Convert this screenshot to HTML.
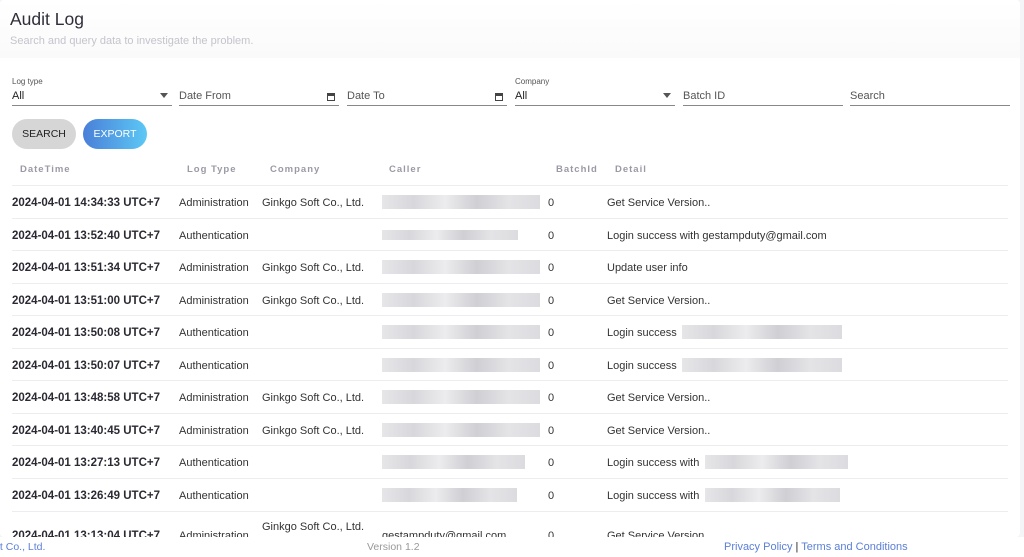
<!DOCTYPE html>
<html><head><meta charset="utf-8"><style>
*{margin:0;padding:0;box-sizing:border-box}
body{width:1024px;height:557px;overflow:hidden;background:#f4f5f7;font-family:"Liberation Sans",sans-serif;position:relative;color:#2b2b33}
.a{position:absolute;white-space:nowrap}
.card{position:absolute;left:0;top:0;width:1020px;height:537px;background:#fff;border-radius:4px;overflow:hidden}
.hdr{position:absolute;left:0;top:0;width:1020px;height:58px;background:linear-gradient(#fff,#fafafa)}
.fld{position:absolute;top:105px;height:1px;background:#888}
.ph{font-size:11px;color:#555;top:90px}
.th{font-size:9.5px;color:#9a9aa6;letter-spacing:1px;top:164px;font-weight:bold}
.line{position:absolute;left:12px;width:996px;height:1px;background:#ededf0}
.r{position:absolute;left:0;width:1020px;height:20px}
.c{font-size:11px;color:#333;margin-top:2px}
.b{font-weight:bold;font-size:11.5px;color:#2a2a33;margin-top:1px}
.blur{position:absolute;height:14px;background:linear-gradient(90deg,#e6e6e9,#d8d8dc 20%,#ececee 40%,#cfcfd4 60%,#e4e4e7 80%,#dcdce0)}
</style></head><body>
<div class="card">
<div class="hdr"></div>
<div class="a" style="left:10px;top:9px;font-size:17.5px;color:#2f2f3a">Audit Log</div>
<div class="a" style="left:10px;top:35px;font-size:11px;color:#c4c4cc">Search and query data to investigate the problem.</div>

<div class="a" style="left:12px;top:77px;font-size:8px;color:#555">Log type</div>
<div class="a" style="left:12px;top:90px;font-size:11px;color:#222">All</div>
<div class="a" style="left:160px;top:93px;border:4px solid transparent;border-top:5px solid #555"></div>
<div class="fld" style="left:12px;width:160px"></div>
<div class="a ph" style="left:179px">Date From</div>
<div class="a" style="left:327px;top:93px;width:8px;height:8px;border:1.5px solid #444;border-top-width:3px"></div>
<div class="fld" style="left:179px;width:160px"></div>
<div class="a ph" style="left:347px">Date To</div>
<div class="a" style="left:495px;top:93px;width:8px;height:8px;border:1.5px solid #444;border-top-width:3px"></div>
<div class="fld" style="left:347px;width:160px"></div>
<div class="a" style="left:515px;top:77px;font-size:8px;color:#555">Company</div>
<div class="a" style="left:515px;top:90px;font-size:11px;color:#222">All</div>
<div class="a" style="left:663px;top:93px;border:4px solid transparent;border-top:5px solid #555"></div>
<div class="fld" style="left:515px;width:160px"></div>
<div class="a ph" style="left:683px">Batch ID</div>
<div class="fld" style="left:683px;width:160px"></div>
<div class="a ph" style="left:850px">Search</div>
<div class="fld" style="left:850px;width:160px"></div>

<div class="a" style="left:12px;top:119px;width:64px;height:30px;border-radius:15px;background:#d6d6d6;font-size:10.5px;color:#222;text-align:center;line-height:30px">SEARCH</div>
<div class="a" style="left:83px;top:119px;width:64px;height:30px;border-radius:15px;background:linear-gradient(90deg,#4a7fd8,#5cc8f5);font-size:10.5px;color:#fff;text-align:center;line-height:30px">EXPORT</div>

<div class="a th" style="left:20px">DateTime</div>
<div class="a th" style="left:187px">Log Type</div>
<div class="a th" style="left:270px">Company</div>
<div class="a th" style="left:389px">Caller</div>
<div class="a th" style="left:556px">BatchId</div>
<div class="a th" style="left:615px">Detail</div>
<div class="line" style="top:185px"></div>
<div class="line" style="top:218px"></div>
<div class="line" style="top:250px"></div>
<div class="line" style="top:283px"></div>
<div class="line" style="top:315px"></div>
<div class="line" style="top:348px"></div>
<div class="line" style="top:380px"></div>
<div class="line" style="top:413px"></div>
<div class="line" style="top:445px"></div>
<div class="line" style="top:478px"></div>
<div class="line" style="top:511px"></div>

<div class="a b" style="left:12px;top:196px">2024-04-01 14:34:33 UTC+7</div><div class="a c" style="left:179px;top:195px">Administration</div><div class="a c" style="left:262px;top:195px">Ginkgo Soft Co., Ltd.</div><div class="blur" style="left:382px;top:195px;width:158px"></div><div class="a c" style="left:548px;top:195px">0</div><div class="a c" style="left:607px;top:195px">Get Service Version..</div>
<div class="a b" style="left:12px;top:229px">2024-04-01 13:52:40 UTC+7</div><div class="a c" style="left:179px;top:228px">Authentication</div><div class="blur" style="left:382px;top:230px;width:136px;height:10px"></div><div class="a c" style="left:548px;top:228px">0</div><div class="a c" style="left:607px;top:228px">Login success with gestampduty@gmail.com</div>
<div class="a b" style="left:12px;top:261px">2024-04-01 13:51:34 UTC+7</div><div class="a c" style="left:179px;top:260px">Administration</div><div class="a c" style="left:262px;top:260px">Ginkgo Soft Co., Ltd.</div><div class="blur" style="left:382px;top:260px;width:158px"></div><div class="a c" style="left:548px;top:260px">0</div><div class="a c" style="left:607px;top:260px">Update user info</div>
<div class="a b" style="left:12px;top:294px">2024-04-01 13:51:00 UTC+7</div><div class="a c" style="left:179px;top:293px">Administration</div><div class="a c" style="left:262px;top:293px">Ginkgo Soft Co., Ltd.</div><div class="blur" style="left:382px;top:293px;width:158px"></div><div class="a c" style="left:548px;top:293px">0</div><div class="a c" style="left:607px;top:293px">Get Service Version..</div>
<div class="a b" style="left:12px;top:326px">2024-04-01 13:50:08 UTC+7</div><div class="a c" style="left:179px;top:325px">Authentication</div><div class="blur" style="left:382px;top:325px;width:158px"></div><div class="a c" style="left:548px;top:325px">0</div><div class="a c" style="left:607px;top:325px">Login success</div><div class="blur" style="left:682px;top:325px;width:160px"></div>
<div class="a b" style="left:12px;top:359px">2024-04-01 13:50:07 UTC+7</div><div class="a c" style="left:179px;top:358px">Authentication</div><div class="blur" style="left:382px;top:358px;width:158px"></div><div class="a c" style="left:548px;top:358px">0</div><div class="a c" style="left:607px;top:358px">Login success</div><div class="blur" style="left:682px;top:358px;width:160px"></div>
<div class="a b" style="left:12px;top:391px">2024-04-01 13:48:58 UTC+7</div><div class="a c" style="left:179px;top:390px">Administration</div><div class="a c" style="left:262px;top:390px">Ginkgo Soft Co., Ltd.</div><div class="blur" style="left:382px;top:390px;width:158px"></div><div class="a c" style="left:548px;top:390px">0</div><div class="a c" style="left:607px;top:390px">Get Service Version..</div>
<div class="a b" style="left:12px;top:424px">2024-04-01 13:40:45 UTC+7</div><div class="a c" style="left:179px;top:423px">Administration</div><div class="a c" style="left:262px;top:423px">Ginkgo Soft Co., Ltd.</div><div class="blur" style="left:382px;top:423px;width:158px"></div><div class="a c" style="left:548px;top:423px">0</div><div class="a c" style="left:607px;top:423px">Get Service Version..</div>
<div class="a b" style="left:12px;top:456px">2024-04-01 13:27:13 UTC+7</div><div class="a c" style="left:179px;top:455px">Authentication</div><div class="blur" style="left:382px;top:455px;width:143px"></div><div class="a c" style="left:548px;top:455px">0</div><div class="a c" style="left:607px;top:455px">Login success with</div><div class="blur" style="left:705px;top:455px;width:143px"></div>
<div class="a b" style="left:12px;top:489px">2024-04-01 13:26:49 UTC+7</div><div class="a c" style="left:179px;top:488px">Authentication</div><div class="blur" style="left:382px;top:488px;width:135px"></div><div class="a c" style="left:548px;top:488px">0</div><div class="a c" style="left:607px;top:488px">Login success with</div><div class="blur" style="left:705px;top:488px;width:135px"></div>
<div class="a b" style="left:12px;top:529px">2024-04-01 13:13:04 UTC+7</div><div class="a c" style="left:179px;top:528px">Administration</div><div class="a c" style="left:262px;top:519px">Ginkgo Soft Co., Ltd.</div><div class="a c" style="left:382px;top:528px">gestampduty@gmail.com</div><div class="a c" style="left:548px;top:528px">0</div><div class="a c" style="left:607px;top:528px">Get Service Version..</div>
</div>
<div class="a" style="left:0;top:537px;width:1024px;height:20px;background:#fff"></div>
<div class="a" style="left:-3px;top:541px;font-size:10.5px;color:#5b7fd6">ft Co., Ltd.</div>
<div class="a" style="left:367px;top:541px;font-size:10.5px;color:#999">Version 1.2</div>
<div class="a" style="left:724px;top:541px;font-size:11px;color:#5b7fd6">Privacy Policy <span style="color:#222">|</span> Terms and Conditions</div>
</body></html>
